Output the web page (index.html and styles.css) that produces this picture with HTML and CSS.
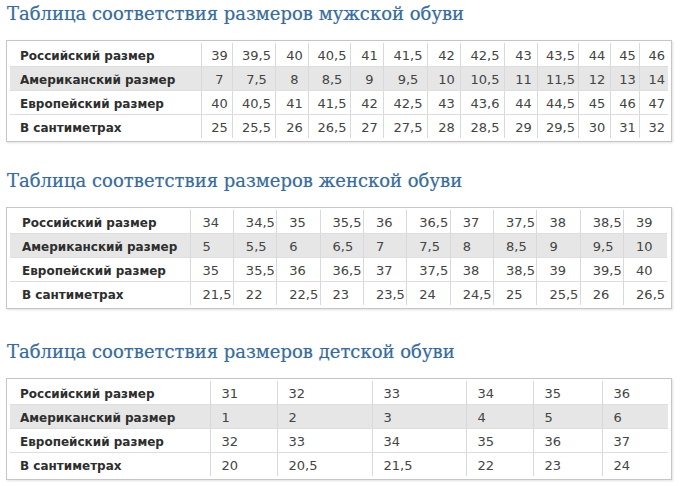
FILE: index.html
```html
<!DOCTYPE html>
<html lang="ru">
<head>
<meta charset="utf-8">
<title>Таблицы размеров обуви</title>
<link rel="stylesheet" href="styles.css">
</head>
<body>
<section class="block">
  <h2 class="title">Таблица соответствия размеров мужской обуви</h2>
  <div class="frame">
    <table class="grid centered">
      <colgroup>
        <col class="w191"><col class="w31"><col class="w43"><col class="w33"><col class="w42"><col class="w33"><col class="w44"><col class="w33"><col class="w44"><col class="w33"><col class="w41"><col class="w32"><col class="w29"><col class="w29">
      </colgroup>
      <tr><th>Российский размер</th><td>39</td><td>39,5</td><td>40</td><td>40,5</td><td>41</td><td>41,5</td><td>42</td><td>42,5</td><td>43</td><td>43,5</td><td>44</td><td>45</td><td>46</td></tr>
      <tr class="alt"><th>Американский размер</th><td>7</td><td>7,5</td><td>8</td><td>8,5</td><td>9</td><td>9,5</td><td>10</td><td>10,5</td><td>11</td><td>11,5</td><td>12</td><td>13</td><td>14</td></tr>
      <tr><th>Европейский размер</th><td>40</td><td>40,5</td><td>41</td><td>41,5</td><td>42</td><td>42,5</td><td>43</td><td>43,6</td><td>44</td><td>44,5</td><td>45</td><td>46</td><td>47</td></tr>
      <tr><th>В сантиметрах</th><td>25</td><td>25,5</td><td>26</td><td>26,5</td><td>27</td><td>27,5</td><td>28</td><td>28,5</td><td>29</td><td>29,5</td><td>30</td><td>31</td><td>32</td></tr>
    </table>
  </div>
</section>

<section class="block second">
  <h2 class="title">Таблица соответствия размеров женской обуви</h2>
  <div class="frame">
    <table class="grid lefted">
      <colgroup>
        <col class="w180"><col><col><col><col><col><col><col><col><col><col><col>
      </colgroup>
      <tr><th>Российский размер</th><td>34</td><td>34,5</td><td>35</td><td>35,5</td><td>36</td><td>36,5</td><td>37</td><td>37,5</td><td>38</td><td>38,5</td><td>39</td></tr>
      <tr class="alt"><th>Американский размер</th><td>5</td><td>5,5</td><td>6</td><td>6,5</td><td>7</td><td>7,5</td><td>8</td><td>8,5</td><td>9</td><td>9,5</td><td>10</td></tr>
      <tr><th>Европейский размер</th><td>35</td><td>35,5</td><td>36</td><td>36,5</td><td>37</td><td>37,5</td><td>38</td><td>38,5</td><td>39</td><td>39,5</td><td>40</td></tr>
      <tr><th>В сантиметрах</th><td>21,5</td><td>22</td><td>22,5</td><td>23</td><td>23,5</td><td>24</td><td>24,5</td><td>25</td><td>25,5</td><td>26</td><td>26,5</td></tr>
    </table>
  </div>
</section>

<section class="block">
  <h2 class="title">Таблица соответствия размеров детской обуви</h2>
  <div class="frame">
    <table class="grid lefted kids">
      <colgroup>
        <col class="w200"><col class="w67"><col class="w95"><col class="w94"><col class="w67"><col class="w69"><col class="w66">
      </colgroup>
      <tr><th>Российский размер</th><td>31</td><td>32</td><td>33</td><td>34</td><td>35</td><td>36</td></tr>
      <tr class="alt"><th>Американский размер</th><td>1</td><td>2</td><td>3</td><td>4</td><td>5</td><td>6</td></tr>
      <tr><th>Европейский размер</th><td>32</td><td>33</td><td>34</td><td>35</td><td>36</td><td>37</td></tr>
      <tr><th>В сантиметрах</th><td>20</td><td>20,5</td><td>21,5</td><td>22</td><td>23</td><td>24</td></tr>
    </table>
  </div>
</section>
</body>
</html>
```
FILE: styles.css
```css
html, body {
  margin: 0;
  padding: 0;
  background: #ffffff;
}
body {
  padding: 0 8px 0 6px;
  font-family: "DejaVu Sans", Verdana, sans-serif;
}
.block {
  margin: 0 0 25px 0;
}
.block.second {
  margin-bottom: 29px;
}
.title {
  margin: 0;
  padding: 2px 0 0 1px;
  height: 40px;
  box-sizing: border-box;
  font-family: "DejaVu Serif", Georgia, serif;
  font-weight: normal;
  font-size: 18px;
  line-height: 24px;
  color: #3a6b9b;
  text-shadow: 0 0 1px rgba(58, 107, 155, 0.4);
}
.frame {
  width: 666px;
  border: 1px solid #c6c6c6;
  padding: 2px 4px 3px 3px;
  box-sizing: border-box;
  box-shadow: 1px 1px 2px rgba(0, 0, 0, 0.12);
}
.grid {
  width: 100%;
  border-collapse: collapse;
  table-layout: fixed;
  font-size: 13px;
}
.grid th, .grid td {
  padding: 3px 0 0 0;
  height: 20px;
  line-height: 20px;
  white-space: nowrap;
  border-bottom: 1px solid #dedede;
  vertical-align: top;
}
.grid tr:last-child th, .grid tr:last-child td {
  border-bottom: none;
}
.grid th {
  text-align: left;
  padding-left: 10px;
  font-size: 12px;
  font-weight: bold;
  color: #2e2e2e;
  border-right: 1px solid #d9d9d9;
}
.grid td {
  color: #444444;
  border-right: 1px solid #d9d9d9;
}
.grid td:last-child {
  border-right: none;
}
.grid .alt th, .grid .alt td {
  background: #e6e6e6;
}
.centered td {
  text-align: center;
  padding-left: 6px;
}
.lefted td {
  text-align: left;
  padding-left: 12px;
}
.lefted th {
  padding-left: 12px;
}
.kids th {
  padding-left: 10px;
}
.kids td {
  padding-left: 11px;
}
.w191 { width: 191px; }
.w180 { width: 180px; }
.w200 { width: 200px; }
.w29 { width: 29px; }
.w31 { width: 31px; }
.w32 { width: 32px; }
.w33 { width: 33px; }
.w41 { width: 41px; }
.w42 { width: 42px; }
.w43 { width: 43px; }
.w44 { width: 44px; }
.w66 { width: 66px; }
.w67 { width: 67px; }
.w69 { width: 69px; }
.w94 { width: 94px; }
.w95 { width: 95px; }
```
